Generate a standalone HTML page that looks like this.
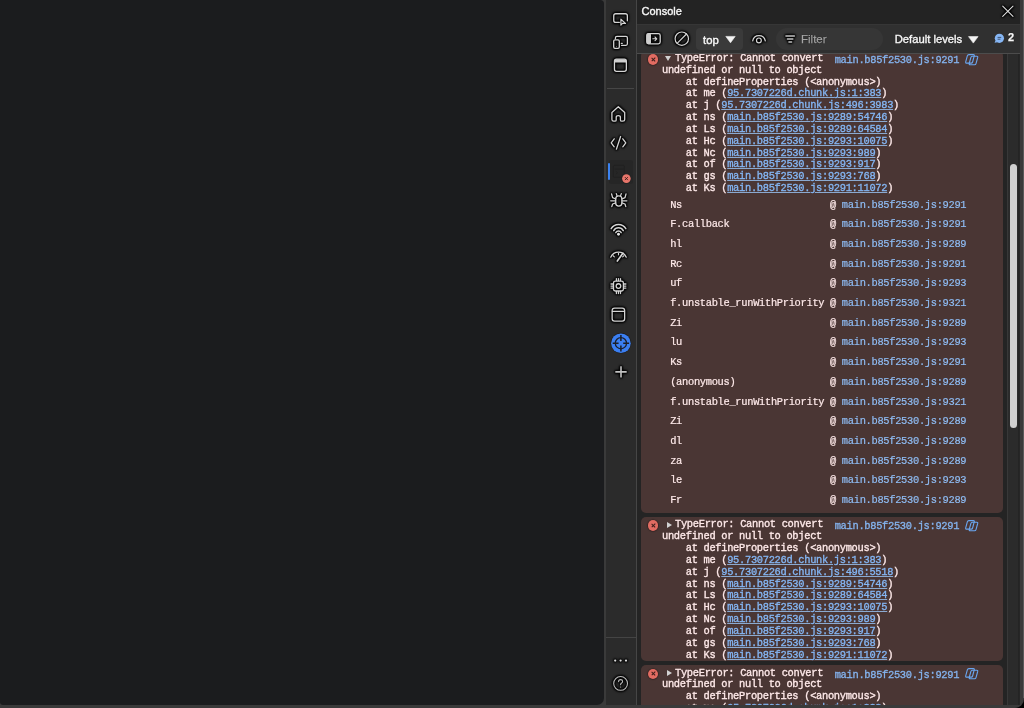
<!DOCTYPE html>
<html><head><meta charset="utf-8">
<style>
*{box-sizing:border-box;margin:0;padding:0}
html,body{width:1024px;height:708px;overflow:hidden;background:#000;position:relative}
#frame{left:0;top:0;width:1024px;height:708px;background:#3a3a3a;border-radius:0 0 9px 0}
body{font-family:"Liberation Sans",sans-serif}
#wrap{position:absolute;left:0;top:0;width:1024px;height:708px;will-change:transform}
.abs{position:absolute}
#left{left:0;top:0;width:604px;height:705px;background:#1b1c1e;border-radius:0 4px 7px 3px}
#side{left:606px;top:0;width:30px;height:705px;background:#2b2b2b}
#sline{left:636px;top:0;width:1px;height:705px;background:#464646}
#head{left:637px;top:0;width:382.5px;height:23.5px;background:#232323}
#tool{left:637px;top:23.5px;width:382.5px;height:29px;background:#303030;border-top:1px solid #363636}
#tline{left:637px;top:52.5px;width:382.5px;height:1.2px;background:#4c4c4c}
#cons{left:637px;top:53.5px;width:382.5px;height:651.5px;background:#242424;overflow:hidden}
#rframe{left:1018.5px;top:53.5px;width:1px;height:651.5px;background:#262626}
#rline{left:1023px;top:0;width:1px;height:698px;background:#5a5a5a}
#track{left:369.8px;top:0;width:11.7px;height:651.5px;background:#2b2b2b;border-left:1px solid #383838}
#thumb{left:373px;top:110.5px;width:7px;height:264px;background:#cfcfcf;border-radius:3.5px}
.t{position:absolute;white-space:pre;line-height:1;-webkit-text-stroke:0.25px currentColor;text-shadow:0 0 1px #000,0 0 0.5px #000}
.box{position:absolute;left:4px;width:362.4px;background:#4a3634;border-radius:5px}
.ln{position:absolute;white-space:pre;font-family:"Liberation Mono",monospace;font-size:10.4px;letter-spacing:-0.31px;line-height:11.83px;color:#ffeaea;-webkit-text-stroke:0.32px currentColor}
.lk{color:#84b6f4;text-decoration:underline;text-decoration-thickness:1.3px;text-decoration-color:#8aa9d0;text-underline-offset:1px}
.src{color:#84b3ee}
.tb{-webkit-text-stroke:0.2px currentColor}
.tsrc{color:#8fbdf5}
.eic{position:absolute;left:6.8px;top:3.4px;width:10.6px;height:10.6px;border-radius:50%;background:#e26c62;box-shadow:0 0 1px 0.6px rgba(20,10,10,.55)}
.eic:before,.eic:after{content:"";position:absolute;left:3px;top:4.9px;width:4.6px;height:0.8px;background:#3d1e1b;transform:rotate(45deg)}
.eic:after{transform:rotate(-45deg)}
.tri-d{position:absolute;left:24px;top:5px;width:0;height:0;border-left:3.5px solid transparent;border-right:3.5px solid transparent;border-top:5.4px solid #d2d2d2}
.tri-r{position:absolute;left:25.5px;top:4.6px;width:0;height:0;border-top:3.4px solid transparent;border-bottom:3.4px solid transparent;border-left:5.3px solid #d2d2d2}
.cop{position:absolute;left:324px;top:3.2px}
svg{position:absolute;overflow:visible}
#ov{left:0;top:0;width:1024px;height:708px}
</style></head><body><div id="wrap">
<div id="frame" class="abs"></div>
<div id="left" class="abs"></div>
<div id="side" class="abs"></div>
<div id="sline" class="abs"></div>
<div id="head" class="abs"></div>
<div id="tool" class="abs"></div>
<div id="tline" class="abs"></div>
<div id="cons" class="abs">
<div class="box" style="top:-2.9px;height:462.5px">
<div class="eic"></div>
<div class="tri-d"></div>
<div class="ln" style="left:34px;top:2.4px">TypeError: Cannot convert</div>
<div class="ln" style="left:21px;top:2.4px">
undefined or null to object
    at defineProperties (&lt;anonymous&gt;)
    at me (<span class="lk">95.7307226d.chunk.js:1:383</span>)
    at j (<span class="lk">95.7307226d.chunk.js:496:3983</span>)
    at ns (<span class="lk">main.b85f2530.js:9289:54746</span>)
    at Ls (<span class="lk">main.b85f2530.js:9289:64584</span>)
    at Hc (<span class="lk">main.b85f2530.js:9293:10075</span>)
    at Nc (<span class="lk">main.b85f2530.js:9293:989</span>)
    at of (<span class="lk">main.b85f2530.js:9293:917</span>)
    at gs (<span class="lk">main.b85f2530.js:9293:768</span>)
    at Ks (<span class="lk">main.b85f2530.js:9291:11072</span>)</div>
<div class="ln src" style="left:193.7px;top:4.4px">main.b85f2530.js:9291</div>
<svg class="cop" width="14" height="12" viewBox="965 53.8 14 12"><g fill="none" stroke="#6aa6ef" stroke-width="1.1" stroke-linejoin="round"><path d="M968.9 54.4 L973.4 54.4 Q974.6 54.4 974.3 55.5 L972.6 61.8 Q972.3 62.9 971.2 62.9 L966.7 62.9 Q965.4 62.9 965.7 61.7 L967.4 55.5 Q967.7 54.4 968.9 54.4 Z"/><path d="M972.3 56.1 L976.8 56.1 Q978 56.1 977.7 57.3 L976 63.4 Q975.7 64.5 974.6 64.5 L970.1 64.5 Q968.9 64.5 969.2 63.3 L970.9 57.2 Q971.2 56.1 972.3 56.1 Z"/></g></svg>
<div class="ln tb" style="left:29.2px;top:149.20px">Ns</div>
<div class="ln tb" style="left:189px;top:149.20px">@ <span class="src tsrc">main.b85f2530.js:9291</span></div>
<div class="ln tb" style="left:29.2px;top:168.87px">F.callback</div>
<div class="ln tb" style="left:189px;top:168.87px">@ <span class="src tsrc">main.b85f2530.js:9291</span></div>
<div class="ln tb" style="left:29.2px;top:188.54px">hl</div>
<div class="ln tb" style="left:189px;top:188.54px">@ <span class="src tsrc">main.b85f2530.js:9289</span></div>
<div class="ln tb" style="left:29.2px;top:208.21px">Rc</div>
<div class="ln tb" style="left:189px;top:208.21px">@ <span class="src tsrc">main.b85f2530.js:9291</span></div>
<div class="ln tb" style="left:29.2px;top:227.88px">uf</div>
<div class="ln tb" style="left:189px;top:227.88px">@ <span class="src tsrc">main.b85f2530.js:9293</span></div>
<div class="ln tb" style="left:29.2px;top:247.55px">f.unstable_runWithPriority</div>
<div class="ln tb" style="left:189px;top:247.55px">@ <span class="src tsrc">main.b85f2530.js:9321</span></div>
<div class="ln tb" style="left:29.2px;top:267.22px">Zi</div>
<div class="ln tb" style="left:189px;top:267.22px">@ <span class="src tsrc">main.b85f2530.js:9289</span></div>
<div class="ln tb" style="left:29.2px;top:286.89px">lu</div>
<div class="ln tb" style="left:189px;top:286.89px">@ <span class="src tsrc">main.b85f2530.js:9293</span></div>
<div class="ln tb" style="left:29.2px;top:306.56px">Ks</div>
<div class="ln tb" style="left:189px;top:306.56px">@ <span class="src tsrc">main.b85f2530.js:9291</span></div>
<div class="ln tb" style="left:29.2px;top:326.23px">(anonymous)</div>
<div class="ln tb" style="left:189px;top:326.23px">@ <span class="src tsrc">main.b85f2530.js:9289</span></div>
<div class="ln tb" style="left:29.2px;top:345.90px">f.unstable_runWithPriority</div>
<div class="ln tb" style="left:189px;top:345.90px">@ <span class="src tsrc">main.b85f2530.js:9321</span></div>
<div class="ln tb" style="left:29.2px;top:365.57px">Zi</div>
<div class="ln tb" style="left:189px;top:365.57px">@ <span class="src tsrc">main.b85f2530.js:9289</span></div>
<div class="ln tb" style="left:29.2px;top:385.24px">dl</div>
<div class="ln tb" style="left:189px;top:385.24px">@ <span class="src tsrc">main.b85f2530.js:9289</span></div>
<div class="ln tb" style="left:29.2px;top:404.91px">za</div>
<div class="ln tb" style="left:189px;top:404.91px">@ <span class="src tsrc">main.b85f2530.js:9289</span></div>
<div class="ln tb" style="left:29.2px;top:424.58px">le</div>
<div class="ln tb" style="left:189px;top:424.58px">@ <span class="src tsrc">main.b85f2530.js:9293</span></div>
<div class="ln tb" style="left:29.2px;top:444.25px">Fr</div>
<div class="ln tb" style="left:189px;top:444.25px">@ <span class="src tsrc">main.b85f2530.js:9289</span></div>
</div>
<div class="box" style="top:463.5px;height:144.1px">
<div class="eic"></div>
<div class="tri-r"></div>
<div class="ln" style="left:34px;top:2.4px">TypeError: Cannot convert</div>
<div class="ln" style="left:21px;top:2.4px">
undefined or null to object
    at defineProperties (&lt;anonymous&gt;)
    at me (<span class="lk">95.7307226d.chunk.js:1:383</span>)
    at j (<span class="lk">95.7307226d.chunk.js:496:5518</span>)
    at ns (<span class="lk">main.b85f2530.js:9289:54746</span>)
    at Ls (<span class="lk">main.b85f2530.js:9289:64584</span>)
    at Hc (<span class="lk">main.b85f2530.js:9293:10075</span>)
    at Nc (<span class="lk">main.b85f2530.js:9293:989</span>)
    at of (<span class="lk">main.b85f2530.js:9293:917</span>)
    at gs (<span class="lk">main.b85f2530.js:9293:768</span>)
    at Ks (<span class="lk">main.b85f2530.js:9291:11072</span>)</div>
<div class="ln src" style="left:193.7px;top:4.4px">main.b85f2530.js:9291</div>
<svg class="cop" width="14" height="12" viewBox="965 53.8 14 12"><g fill="none" stroke="#6aa6ef" stroke-width="1.1" stroke-linejoin="round"><path d="M968.9 54.4 L973.4 54.4 Q974.6 54.4 974.3 55.5 L972.6 61.8 Q972.3 62.9 971.2 62.9 L966.7 62.9 Q965.4 62.9 965.7 61.7 L967.4 55.5 Q967.7 54.4 968.9 54.4 Z"/><path d="M972.3 56.1 L976.8 56.1 Q978 56.1 977.7 57.3 L976 63.4 Q975.7 64.5 974.6 64.5 L970.1 64.5 Q968.9 64.5 969.2 63.3 L970.9 57.2 Q971.2 56.1 972.3 56.1 Z"/></g></svg>
</div>
<div class="box" style="top:611.7px;height:200px">
<div class="eic"></div>
<div class="tri-r"></div>
<div class="ln" style="left:34px;top:2.4px">TypeError: Cannot convert</div>
<div class="ln" style="left:21px;top:2.4px">
undefined or null to object
    at defineProperties (&lt;anonymous&gt;)
    at me (<span class="lk">95.7307226d.chunk.js:1:383</span>)
    at j (<span class="lk">95.7307226d.chunk.js:496:5518</span>)
    at ns (<span class="lk">main.b85f2530.js:9289:54746</span>)
    at Ls (<span class="lk">main.b85f2530.js:9289:64584</span>)
    at Hc (<span class="lk">main.b85f2530.js:9293:10075</span>)
    at Nc (<span class="lk">main.b85f2530.js:9293:989</span>)
    at of (<span class="lk">main.b85f2530.js:9293:917</span>)
    at gs (<span class="lk">main.b85f2530.js:9293:768</span>)
    at Ks (<span class="lk">main.b85f2530.js:9291:11072</span>)</div>
<div class="ln src" style="left:193.7px;top:4.4px">main.b85f2530.js:9291</div>
<svg class="cop" width="14" height="12" viewBox="965 53.8 14 12"><g fill="none" stroke="#6aa6ef" stroke-width="1.1" stroke-linejoin="round"><path d="M968.9 54.4 L973.4 54.4 Q974.6 54.4 974.3 55.5 L972.6 61.8 Q972.3 62.9 971.2 62.9 L966.7 62.9 Q965.4 62.9 965.7 61.7 L967.4 55.5 Q967.7 54.4 968.9 54.4 Z"/><path d="M972.3 56.1 L976.8 56.1 Q978 56.1 977.7 57.3 L976 63.4 Q975.7 64.5 974.6 64.5 L970.1 64.5 Q968.9 64.5 969.2 63.3 L970.9 57.2 Q971.2 56.1 972.3 56.1 Z"/></g></svg>
</div>
<div id="track" class="abs"></div>
<div id="thumb" class="abs"></div>
</div>
<div id="rframe" class="abs"></div>
<div id="rline" class="abs"></div>

<div class="abs" style="left:606.8px;top:88px;width:27.7px;height:1px;background:#464646"></div>
<div class="abs" style="left:606px;top:637px;width:30px;height:1px;background:#444"></div>
<!-- active tab -->
<div class="abs" style="left:608.8px;top:159.6px;width:24px;height:24.2px;background:#262626;border-radius:3px"></div>
<div class="abs" style="left:608.3px;top:162.7px;width:2.2px;height:17.8px;background:#3b82f0;border-radius:1px"></div>

<!-- header text -->
<div class="t" style="left:641.5px;top:6px;font-size:11px;color:#f8f8f8;-webkit-text-stroke:0.4px #f8f8f8">Console</div>
<div class="abs" style="left:696px;top:28.1px;width:47px;height:21.5px;background:#3a3a3a;border-radius:4px"></div>
<div class="abs" style="left:775.7px;top:27.8px;width:107.3px;height:22.2px;background:#363636;border-radius:11px"></div>
<div class="t" style="left:703px;top:34.5px;font-size:11.3px;color:#f8f8f8;-webkit-text-stroke:0.45px #f8f8f8">top</div>
<div class="t" style="left:801px;top:34px;font-size:11.5px;color:#a6a6a6">Filter</div>
<div class="t" style="left:894.7px;top:34px;font-size:11.25px;color:#f8f8f8;-webkit-text-stroke:0.4px #f8f8f8">Default levels</div>
<div class="t" style="left:1008px;top:31.5px;font-size:11px;font-weight:bold;color:#f8f8f8">2</div>

<svg id="ov" viewBox="0 0 1024 708">
<g fill="none" stroke="#d4d4d4" stroke-width="1.3" stroke-linecap="round" stroke-linejoin="round" style="filter:drop-shadow(0 0 0.8px #000) drop-shadow(0 0 0.8px #000) drop-shadow(0 0 0.5px #000)">
 <!-- inspect -->
 <path d="M619.3 22.45 L615.8 22.45 Q613.75 22.45 613.75 20.4 L613.75 15.8 Q613.75 13.75 615.8 13.75 L625.3 13.75 Q627.35 13.75 627.35 15.8 L627.35 20.8"/>
 <path d="M620.9 19.2 L620.9 25.2 L622.5 23.4 L625.5 23.4 Z" stroke-width="1.2"/>
 <!-- device -->
 <path d="M615.4 38.8 L615.4 37.9 Q615.4 36.4 616.9 36.4 L626 36.4 Q627.4 36.4 627.4 37.9 L627.4 43.8 Q627.4 45.3 626 45.3 L621.5 45.3"/>
 <rect x="613.7" y="39.8" width="5.6" height="8.6" rx="1.3"/>
 <path d="M621.3 43.3 L622.3 43.3" />
 <circle cx="616.5" cy="46.5" r="0.4" fill="#cdcdcd" stroke="none"/>
 <!-- window -->
 <rect x="614.45" y="59.15" width="11.9" height="12.2" rx="2"/>
 <path d="M614.45 62.6 L614.45 61.15 Q614.45 59.15 616.45 59.15 L624.35 59.15 Q626.35 59.15 626.35 61.15 L626.35 62.6 Z" fill="#cdcdcd" stroke="none"/>
 <!-- home -->
 <path d="M618.3 106.8 L611.9 112.6 L611.9 119.4 Q611.9 121.2 613.7 121.2 L614.9 121.2 Q616.2 121.2 616.2 119.9 L616.2 117.3 Q616.2 115.6 618.3 115.6 Q620.4 115.6 620.4 117.3 L620.4 119.9 Q620.4 121.2 621.7 121.2 L622.9 121.2 Q624.7 121.2 624.7 119.4 L624.7 112.6 Z"/>
 <!-- code -->
 <path d="M614.2 138.8 L611.2 142.8 L614.2 146.8 M622.8 138.8 L625.8 142.8 L622.8 146.8 M620.6 136.5 L616.4 149.2"/>
 <!-- bug -->
 <rect x="615.7" y="195.8" width="6.2" height="10.4" rx="3.1"/>
 <path d="M617 195.6 L616.3 193.6 M620.6 195.6 L621.3 193.6 M615.7 199 L612.6 197.6 L611.6 194 M621.9 199 L625 197.6 L626 194 M615.7 200.8 L610.7 200.8 M621.9 200.8 L626.9 200.8 M615.7 202.8 L612.6 204 L611.8 206.6 M621.9 202.8 L625 204 L625.8 206.6"/>
 <!-- wifi -->
 <path d="M611.14 228.65 A8.5 8.5 0 0 1 625.86 228.65" stroke-width="1.45"/>
 <path d="M613.73 230.66 A5.4 5.4 0 0 1 623.27 230.66" stroke-width="1.45"/>
 <path d="M615.80 232.68 A3 3 0 0 1 621.20 232.68" stroke-width="1.4"/>
 <circle cx="618.5" cy="234.3" r="1.45" fill="#e6e6e6" stroke="none"/>
 <!-- gauge -->
 <path d="M610.73 257.14 A8.5 8.5 0 0 1 626.27 257.14" stroke-width="1.3"/>
 <path d="M614.34 256.85 L613.15 255.78 M618.50 254.80 L618.50 253.40 M622.66 256.85 L623.85 255.78" stroke-width="1.2"/>
 <path d="M617.3 261 L622.9 253.3" stroke-width="1.7"/>
 <!-- memory chip -->
 <rect x="613.5" y="281.1" width="9.9" height="9.9" rx="1.8"/>
 <circle cx="618.45" cy="286.05" r="2.3"/>
 <path d="M616.4 278.6 L616.4 280.6 M618.45 278.6 L618.45 280.6 M620.5 278.6 L620.5 280.6 M616.4 291.5 L616.4 293.5 M618.45 291.5 L618.45 293.5 M620.5 291.5 L620.5 293.5 M611 284 L613 284 M611 286.05 L613 286.05 M611 288.1 L613 288.1 M623.9 284 L625.9 284 M623.9 286.05 L625.9 286.05 M623.9 288.1 L625.9 288.1"/>
 <!-- application -->
 <rect x="612.15" y="308.15" width="12.5" height="12.9" rx="2.4"/>
 <path d="M612.4 311.4 L624.4 311.4"/>
 <!-- plus -->
 <path d="M621 366.2 L621 377.6 M615.3 371.9 L626.7 371.9" stroke="#c2c2c2" stroke-width="1.6" stroke-linecap="butt"/>
 <!-- dots -->
 <circle cx="615.2" cy="660.6" r="1.15" fill="#dcdcdc" stroke="none"/>
 <circle cx="620.6" cy="660.6" r="1.15" fill="#dcdcdc" stroke="none"/>
 <circle cx="626" cy="660.6" r="1.15" fill="#dcdcdc" stroke="none"/>
 <!-- help -->
 <circle cx="620.6" cy="683.4" r="6.9" stroke="#bdbdbd" stroke-width="1.1"/>
 <path d="M618.6 681.6 Q618.6 679.6 620.6 679.6 Q622.6 679.6 622.6 681.4 Q622.6 682.6 621.3 683.2 Q620.6 683.6 620.6 684.8" stroke="#bdbdbd" stroke-width="1.1"/>
 <circle cx="620.6" cy="687" r="0.6" fill="#bdbdbd" stroke="none"/>
 <!-- close X -->
 <path d="M1002.7 6.2 L1013 16.3 M1013 6.2 L1002.7 16.3" stroke="#e0e0e0" stroke-width="1.1"/>
 <!-- sidebar toggle -->
 <rect x="646.8" y="33.7" width="13.4" height="10.2" rx="1.8"/>
 <rect x="646.6" y="33.5" width="4.4" height="10.6" rx="1" fill="#cdcdcd" stroke="none"/>
 <path d="M652.8 38.8 L656.6 38.8 M655 37 L656.8 38.8 L655 40.6" stroke-width="1.1"/>
 <!-- clear -->
 <circle cx="681.8" cy="38.7" r="6.7" stroke-width="1.2"/>
 <path d="M686.5 34 L677.1 43.4" stroke-width="1.2"/>
 <!-- eye -->
 <path d="M752.7 40.8 A6.4 6.4 0 0 1 765.3 40.8" stroke-width="1.25"/>
 <circle cx="758.9" cy="40.4" r="2.4" stroke-width="1.2"/>
 <!-- filter -->
 <path d="M785.9 35.9 L794.4 35.9 M787.4 39 L792.9 39 M788.9 42 L791.6 42" stroke-width="1.5" stroke="#c4c4c4"/>
</g>
<!-- dropdown triangles -->
<path d="M725.8 36.4 L735.2 36.4 L730.5 42.8 Z" fill="#f4f4f4" stroke="#f4f4f4" stroke-width="0.6" stroke-linejoin="round"/>
<path d="M968.5 36.6 L978.1 36.6 L973.3 43.1 Z" fill="#f4f4f4" stroke="#f4f4f4" stroke-width="0.6" stroke-linejoin="round"/>
<!-- message bubble -->
<circle cx="999.4" cy="38.3" r="4.6" fill="#86b6f4"/>
<path d="M995.5 40.5 L994.6 42.8 L997.4 42.2 Z" fill="#86b6f4"/>
<path d="M997.6 37.4 L1001.2 37.4 M997.6 39.2 L1000.4 39.2" stroke="#2c3a50" stroke-width="0.8"/>
<!-- crosshair -->
<circle cx="620.9" cy="343.2" r="10.4" fill="#1a1a1a" opacity="0.8"/>
<circle cx="620.9" cy="343.2" r="9.8" fill="#3b7ff2"/>
<circle cx="620.9" cy="343.2" r="5.6" fill="none" stroke="#1c1f28" stroke-width="1.3"/>
<path d="M620.9 335 L620.9 340.9 M620.9 345.5 L620.9 351.4 M612.7 343.2 L618.6 343.2 M623.2 343.2 L629.1 343.2" stroke="#1c1f28" stroke-width="1.5"/>
<!-- console badge -->
<rect x="613.4" y="165.4" width="11" height="12" rx="1" fill="none" stroke="#1f1f1f" stroke-width="0.8"/>
<path d="M614.5 169 L623.5 169" stroke="#1f1f1f" stroke-width="0.8"/>
<path d="M615.8 171.3 L617.6 172.8 L615.8 174.3" fill="none" stroke="#1f1f1f" stroke-width="0.8"/>
<circle cx="626.4" cy="178.6" r="4.9" fill="#202020"/>
<circle cx="626.4" cy="178.6" r="4.3" fill="#e8766b"/>
<path d="M624.9 177.1 L627.9 180.1 M627.9 177.1 L624.9 180.1" stroke="#3a1c1a" stroke-width="0.9"/>
</svg>
</div></body></html>
